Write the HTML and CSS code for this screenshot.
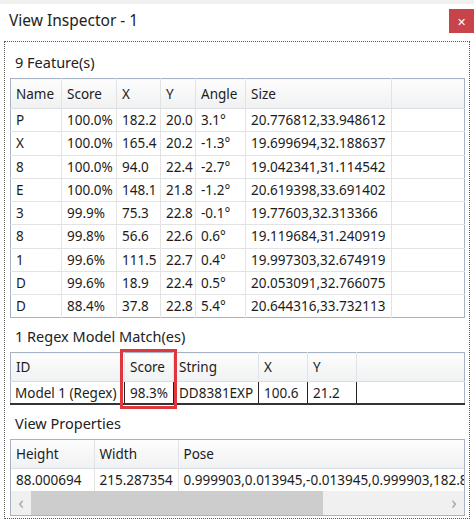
FILE: index.html
```html
<!DOCTYPE html>
<html lang="en">
<head>
    <meta charset="UTF-8">
    <title>View Inspector - 1</title>
    <link rel="stylesheet" href="styles.css">
</head>
<body>

<div class="top-strip"></div>

<!-- Window title -->
<div class="titlebar">
    <span class="title">View Inspector - 1</span>
    <span class="close">&#x2715;</span>
</div>

<div class="panel">

    <!-- Features -->
    <div class="label">9 Feature(s)</div>
    <table class="grid features">
        <colgroup>
            <col style="width: 51px"><col style="width: 55px"><col style="width: 44px">
            <col style="width: 35px"><col style="width: 50px"><col style="width: 146px"><col>
        </colgroup>
        <thead>
            <tr><th>Name</th><th>Score</th><th>X</th><th>Y</th><th>Angle</th><th>Size</th><th></th></tr>
        </thead>
        <tbody>
            <tr><td>P</td><td>100.0%</td><td>182.2</td><td>20.0</td><td>3.1°</td><td>20.776812,33.948612</td><td></td></tr>
            <tr><td>X</td><td>100.0%</td><td>165.4</td><td>20.2</td><td>-1.3°</td><td>19.699694,32.188637</td><td></td></tr>
            <tr><td>8</td><td>100.0%</td><td>94.0</td><td>22.4</td><td>-2.7°</td><td>19.042341,31.114542</td><td></td></tr>
            <tr><td>E</td><td>100.0%</td><td>148.1</td><td>21.8</td><td>-1.2°</td><td>20.619398,33.691402</td><td></td></tr>
            <tr><td>3</td><td>99.9%</td><td>75.3</td><td>22.8</td><td>-0.1°</td><td>19.77603,32.313366</td><td></td></tr>
            <tr><td>8</td><td>99.8%</td><td>56.6</td><td>22.6</td><td>0.6°</td><td>19.119684,31.240919</td><td></td></tr>
            <tr><td>1</td><td>99.6%</td><td>111.5</td><td>22.7</td><td>0.4°</td><td>19.997303,32.674919</td><td></td></tr>
            <tr><td>D</td><td>99.6%</td><td>18.9</td><td>22.4</td><td>0.5°</td><td>20.053091,32.766075</td><td></td></tr>
            <tr><td>D</td><td>88.4%</td><td>37.8</td><td>22.8</td><td>5.4°</td><td>20.644316,33.732113</td><td></td></tr>
        </tbody>
    </table>

    <!-- Regex matches -->
    <div class="label">1 Regex Model Match(es)</div>
    <div class="match-wrap">
        <table class="grid matches">
            <colgroup>
                <col style="width: 114px"><col style="width: 49px"><col style="width: 85px">
                <col style="width: 49px"><col style="width: 49px"><col>
            </colgroup>
            <thead>
                <tr><th>ID</th><th class="score-head">Score</th><th>String</th><th>X</th><th>Y</th><th></th></tr>
            </thead>
            <tbody>
                <tr class="selected"><td>Model 1 (Regex)</td><td>98.3%</td><td>DD8381EXP</td><td>100.6</td><td>21.2</td><td></td></tr>
            </tbody>
        </table>
        <div class="highlight"></div>
    </div>

    <!-- View properties -->
    <div class="label">View Properties</div>
    <div class="props">
        <div class="props-view">
            <table class="grid props-table">
                <colgroup>
                    <col style="width: 83px"><col style="width: 84px"><col style="width: 420px">
                </colgroup>
                <thead>
                    <tr><th>Height</th><th>Width</th><th>Pose</th></tr>
                </thead>
                <tbody>
                    <tr><td>88.000694</td><td>215.287354</td><td>0.999903,0.013945,-0.013945,0.999903,182.8</td></tr>
                </tbody>
            </table>
        </div>
        <div class="hscroll">
            <span class="arrow">&#x2039;</span>
            <span class="thumb"></span>
            <span class="track"></span>
            <span class="arrow">&#x203A;</span>
        </div>
    </div>

</div>

</body>
</html>
```

FILE: styles.css
```css
* {
    box-sizing: border-box;
}
body {
    margin: 0;
    background: #fff;
    color: #1c1c1c;
    font-family: "Noto Sans", "Open Sans", sans-serif;
    font-size: 13.5px;
}
.top-strip {
    height: 4px;
    background: #f0f0f0;
}
.titlebar {
    display: flex;
    justify-content: space-between;
    align-items: flex-start;
    height: 37px;
    padding-left: 9px;
}
.title {
    font-size: 15.5px;
    line-height: 20px;
    margin-top: 6px;
    color: #222;
}
.close {
    width: 25px;
    height: 24px;
    margin-top: 5px;
    background: #c9444a;
    color: #fff;
    font-size: 11px;
    display: flex;
    align-items: center;
    justify-content: center;
}
.panel {
    margin-left: 4px;
    width: 466px;
    height: 478px;
    border: 1px dotted #555;
    padding: 2px 4px 0 5px;
}
.label {
    font-size: 14.5px;
    line-height: 20px;
    padding: 8px 0 6px 5px;
    color: #222;
}
.grid {
    width: 455px;
    table-layout: fixed;
    border-collapse: collapse;
    border: 1px solid #a5b3c5;
}
.grid th {
    height: 30px;
    padding: 0 5px;
    font-weight: normal;
    text-align: left;
    background: linear-gradient(#fdfdfd, #f0f1f2);
    border-right: 1px solid #e1e3e6;
    border-bottom: 1px solid #dadde1;
    white-space: nowrap;
    overflow: hidden;
}
.grid td {
    height: 23.25px;
    padding: 0 5px;
    border-right: 1px solid #e3e3e3;
    border-bottom: 1px solid #e3e3e3;
    white-space: nowrap;
    overflow: hidden;
}
.grid th:last-child,
.grid td:last-child {
    border-right: none;
}
.features tbody tr:last-child td {
    border-bottom: none;
}

/* regex match table */
.match-wrap {
    position: relative;
}
.matches th {
    height: 29px;
}
.matches td {
    height: 22px;
}
.matches .selected td {
    border-right: 1px solid #222;
    border-bottom: 2px solid #333;
}
.matches .selected td:first-child {
    padding-left: 4px;
    padding-right: 0;
}
.matches .selected td:last-child {
    border-right: none;
}
.score-head {
    padding-left: 7px;
}
.highlight {
    position: absolute;
    left: 110px;
    top: -3px;
    width: 57px;
    height: 60px;
    border: 3px solid #e0373d;
}

/* view properties */
.props {
    width: 455px;
    border: 1px solid #a5b3c5;
}
.props-view {
    overflow: hidden;
}
.props-table {
    width: 587px;
    border: none;
}
.props-table th {
    height: 29px;
}
.props-table td {
    height: 22px;
    border-bottom: none;
}
.props-table th:last-child,
.props-table td:last-child {
    border-right: 1px solid #e3e3e3;
}
.hscroll {
    display: flex;
    height: 24px;
    background: #f0f0f0;
}
.hscroll .arrow {
    width: 20px;
    color: #a6a6a6;
    font-size: 18px;
    line-height: 22px;
    text-align: center;
}
.hscroll .thumb {
    width: 292px;
    background: #cdcdcd;
}
.hscroll .track {
    flex: 1;
}
```
